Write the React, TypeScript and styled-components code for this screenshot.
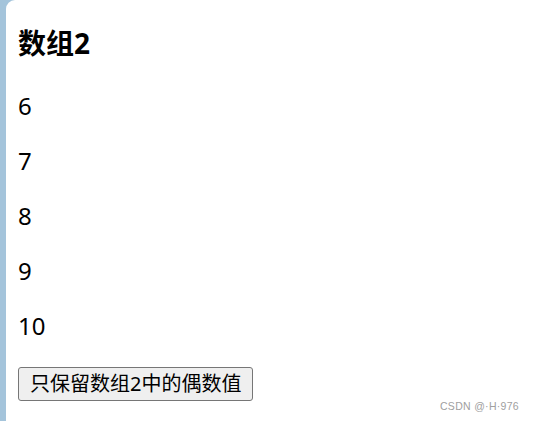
import React from "react";
import styled, { createGlobalStyle } from "styled-components";

const Global = createGlobalStyle`
  html, body { margin: 0; padding: 0; background: #ffffff; }
  body { font-family: "Noto Sans", "Noto Sans CJK SC", sans-serif; }
`;

const Frame = styled.div`
  position: relative;
  display: flex;
  height: 100vh;
  background: #a4c4db;
  padding-left: 6px;
  box-sizing: border-box;
  overflow: hidden;
`;

const Panel = styled.main`
  flex: 1;
  background: #ffffff;
  border-top-left-radius: 9px;
  padding: 29px 0 0 12px;
  display: flex;
  flex-direction: column;
  align-items: flex-start;
`;

const Title = styled.h2`
  margin: 0;
  font-family: "Noto Sans", "Noto Sans CJK SC", sans-serif;
  font-size: 28px;
  line-height: 28px;
  font-weight: 700;
  color: #000;
`;

const List = styled.div`
  display: flex;
  flex-direction: column;
  gap: 27px;
  margin-top: 35px;
`;

const Item = styled.p`
  margin: 0;
  font-size: 24px;
  line-height: 28px;
  color: #000;
`;

const Action = styled.button`
  margin-top: 27px;
  height: 34px;
  padding: 0 11px;
  font-family: "Noto Sans", "Noto Sans CJK SC", sans-serif;
  font-size: 20px;
  line-height: 1;
  color: #000;
  background: #efefef;
  border: 1px solid #767676;
  border-radius: 3px;
`;

const Watermark = styled.span`
  position: absolute;
  right: 15px;
  bottom: 9px;
  font-family: "Liberation Sans", sans-serif;
  font-size: 10.5px;
  letter-spacing: 0.3px;
  color: #a0a0a0;
`;

const numbers = [6, 7, 8, 9, 10];

export default function App() {
  return (
    <>
      <Global />
      <Frame>
        <Panel>
          <Title>数组2</Title>
          <List>
            {numbers.map((n) => (
              <Item key={n}>{n}</Item>
            ))}
          </List>
          <Action>只保留数组2中的偶数值</Action>
        </Panel>
        <Watermark>CSDN @·H·976</Watermark>
      </Frame>
    </>
  );
}
